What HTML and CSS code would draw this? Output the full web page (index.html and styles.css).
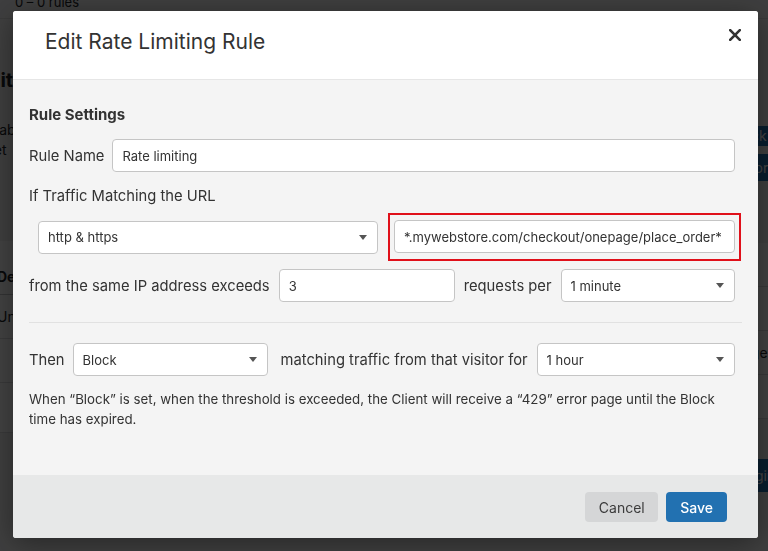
FILE: index.html
```html
<!DOCTYPE html>
<html lang="en">
<head>
    <meta charset="UTF-8">
    <meta name="viewport" content="width=device-width, initial-scale=1.0">
    <title>Edit Rate Limiting Rule</title>
    <link rel="stylesheet" href="styles.css">
</head>
<body>
    <!-- pagina sotto il modale -->
    <div class="page">
        <div class="page-top"><span>0 – 0 rules</span></div>
        <div class="page-content">
            <div class="page-left">
                <h2>Rate Limiting</h2>
                <p>Protect your<br>site from an abuse<br>workflow. Set<br>limits per IP</p>
                <h4>Abuse</h4>
                <p>Deliver</p>
                <div class="page-band"><b>Description</b></div>
                <div class="page-row">Under</div>
                <div class="page-row"></div>
                <div class="page-row empty"></div>
                <h2 class="page-h2b">Events</h2>
                <p>Visible</p>
            </div>
            <div class="page-right">
                <span class="wp-btn">Block</span>
                <span class="wp-btn tall">Import</span>
                <div class="page-row"></div>
                <div class="page-row"></div>
                <div class="page-row">Page</div>
                <div class="page-row"></div>
                <span class="wp-btn bottom">Logging</span>
            </div>
        </div>
    </div>

    <div class="overlay"></div>

    <div class="modal">
        <div class="modal-header">
            <h1 class="modal-title">Edit Rate Limiting Rule</h1>
            <button class="close-button" aria-label="Close">
                <svg width="12" height="12" viewBox="0 0 12 12">
                    <path d="M1.2 1.2 L10.8 10.8 M10.8 1.2 L1.2 10.8" stroke="#333" stroke-width="2.6" stroke-linecap="square"/>
                </svg>
            </button>
        </div>

        <div class="modal-body">
            <h3 class="section-title">Rule Settings</h3>

            <div class="row name-row">
                <label>Rule Name</label>
                <div class="field grow">Rate limiting</div>
            </div>

            <div class="section-label">If Traffic Matching the URL</div>

            <div class="row url-row">
                <div class="field select scheme">http &amp; https</div>
                <div class="highlight">
                    <div class="field">*.mywebstore.com/checkout/onepage/place_order*</div>
                </div>
            </div>

            <div class="row">
                <label>from the same IP address exceeds</label>
                <div class="field count">3</div>
                <label>requests per</label>
                <div class="field select grow">1 minute</div>
            </div>

            <div class="divider"></div>

            <div class="row">
                <label>Then</label>
                <div class="field select action">Block</div>
                <label class="mid-label">matching traffic from that visitor for</label>
                <div class="field select grow">1 hour</div>
            </div>

            <p class="help">When “Block” is set, when the threshold is exceeded, the Client will receive a “429” error page until the Block time has expired.</p>
        </div>

        <div class="modal-footer">
            <button class="btn btn-cancel">Cancel</button>
            <button class="btn btn-save">Save</button>
        </div>
    </div>
</body>
</html>
```

FILE: styles.css
```css
* {
    box-sizing: border-box;
}
body {
    margin: 0;
    width: 768px;
    height: 551px;
    overflow: hidden;
    font-family: Inter, "Noto Sans", sans-serif;
    color: #333;
    background: #f0f0f1;
}

/* pagina dietro */
.page {
    font-size: 14px;
    color: #1d2327;
    height: 551px;
    overflow: hidden;
}
.page-top {
    height: 19px;
    border-bottom: 1px solid #dcdcde;
    padding-left: 15px;
    font-size: 13px;
    line-height: 4px;
}
.page-content {
    display: flex;
}
.page-left {
    width: 220px;
    margin-left: -83px;
    white-space: nowrap;
}
.page-left h2 {
    margin: 49px 0 0;
    font-size: 20px;
    line-height: 24px;
}
.page-left p {
    margin: 8px 0 0;
    line-height: 20px;
}
.page-left h4 {
    margin: 5px 0 0;
    font-size: 14px;
    line-height: 20px;
}
.page-left h4 + p {
    margin-top: 0;
}
.page-band {
    margin-top: 16px;
    height: 54px;
    background: #fff;
    padding-top: 27px;
    border-bottom: 1px solid #c3c4c7;
    padding-left: 80px;
}
.page-row {
    height: 44px;
    line-height: 44px;
    border-bottom: 1px solid #dcdcde;
    padding-left: 80px;
    background: #fff;
}
.page-row.empty {
    height: 50px;
}
.page-left .page-h2b {
    margin-top: 28px;
}
.page-right {
    margin-left: auto;
    margin-right: -60px;
    width: 150px;
    display: flex;
    flex-direction: column;
    align-items: stretch;
}
.page-right .page-row {
    padding-left: 56px;
}
.wp-btn {
    display: block;
    margin-top: 107px;
    height: 20px;
    line-height: 20px;
    background: #2271b1;
    color: #fff;
    padding-left: 52px;
}
.wp-btn.tall {
    margin-top: 8px;
    height: 27px;
    line-height: 27px;
    margin-bottom: 62px;
}
.wp-btn.bottom {
    margin-top: 40px;
    height: 33px;
    line-height: 33px;
}

.overlay {
    position: fixed;
    inset: 0;
    background: rgba(0, 0, 0, 0.74);
}

/* modale */
.modal {
    position: fixed;
    left: 13px;
    top: 11px;
    width: 745px;
    height: 527px;
    background: #f4f4f4;
    border-radius: 3px;
    overflow: hidden;
    display: flex;
    flex-direction: column;
    box-shadow: 0 5px 30px rgba(0, 0, 0, 0.4);
}
.modal-header {
    height: 69px;
    flex: none;
    background: #fff;
    border-bottom: 1px solid #e6e6e6;
    display: flex;
    justify-content: space-between;
    align-items: flex-start;
    padding: 18px 17px 0 32px;
}
.modal-title {
    margin: 0;
    font-size: 21px;
    font-weight: 400;
    line-height: 26px;
    color: #333;
}
.close-button {
    background: none;
    border: 0;
    padding: 0;
    width: 12px;
    height: 12px;
    cursor: pointer;
}
.close-button svg {
    display: block;
}
.modal-body {
    flex: 1;
    padding: 25px 23px 0 16px;
}
.section-title {
    margin: 0 0 14px;
    font-size: 15px;
    font-weight: 700;
    line-height: 20px;
}
.row {
    display: flex;
    align-items: center;
    gap: 9px;
}
.row label {
    font-size: 14.75px;
    line-height: 20px;
    white-space: nowrap;
}
.name-row {
    gap: 8px;
    margin-bottom: 14px;
}
.section-label {
    font-size: 14.75px;
    line-height: 20px;
    margin-bottom: 7px;
}
.field {
    height: 33px;
    flex: none;
    min-width: 0;
    border: 1px solid #c5c5c5;
    border-radius: 4px;
    background: #fff;
    padding: 0 9px;
    display: flex;
    align-items: center;
    font-size: 13px;
    color: #333;
    white-space: nowrap;
    overflow: hidden;
}
.grow {
    flex: 1;
}
.select {
    justify-content: space-between;
    padding-right: 10px;
}
.select::after {
    content: "";
    border-left: 4.5px solid transparent;
    border-right: 4.5px solid transparent;
    border-top: 5px solid #555;
}
.url-row {
    gap: 10px;
    margin-bottom: 8px;
}
.scheme {
    width: 340px;
    margin-left: 9px;
}
.highlight {
    flex: 1;
    min-width: 0;
    margin-right: -6px;
    border: 2px solid #e0101a;
    padding: 5px 4px 6px;
}
.count {
    width: 176px;
}
.divider {
    height: 1px;
    background: #e1e1e1;
    margin: 20px -7px 20px 0;
}
.action {
    width: 195px;
    margin-left: -1px;
}
.mid-label {
    margin-left: 4px;
}
.help {
    margin: 13px 0 0;
    font-size: 13.3px;
    line-height: 20px;
    color: #333;
}
.modal-footer {
    height: 63px;
    flex: none;
    background: #e7e8e8;
    display: flex;
    justify-content: flex-end;
    align-items: flex-start;
    gap: 8px;
    padding: 17px 31px 0 0;
}
.btn {
    height: 30px;
    padding: 0 14px;
    border: 0;
    border-radius: 4px;
    font-family: Inter, "Noto Sans", sans-serif;
    font-size: 14px;
    cursor: pointer;
}
.btn-cancel {
    padding: 0 13.5px;
    background: #d5d6d7;
    color: #3c3c3c;
}
.btn-save {
    background: #2271b1;
    color: #fff;
    font-weight: 500;
}
```
